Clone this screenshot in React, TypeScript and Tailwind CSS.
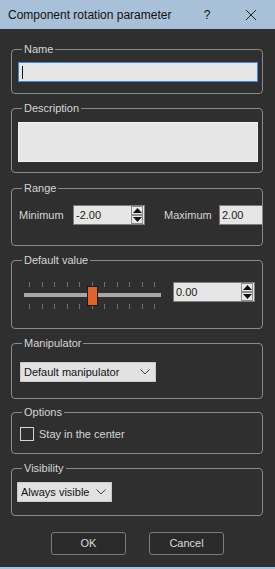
import React from "react";

function Group({
  title,
  className = "",
  children,
}: {
  title: string;
  className?: string;
  children?: React.ReactNode;
}) {
  return (
    <fieldset className={`min-w-0 rounded-[4px] border border-[#8a8a8a] ${className}`}>
      <legend className="ml-[10px] px-[2px] text-[11px] leading-[16px] text-[#d6d6d6]">
        {title}
      </legend>
      {children}
    </fieldset>
  );
}

const Arrow = ({ up }: { up?: boolean }) => (
  <div className="flex h-[9px] items-center justify-center border border-[#8c8c8c] bg-[#e8e8e8]">
    <svg width="9" height="5" viewBox="0 0 9 5">
      {up ? <polygon points="0,5 9,5 4.5,0" fill="#111" /> : <polygon points="0,0 9,0 4.5,5" fill="#111" />}
    </svg>
  </div>
);

function SpinBox({ value, className = "" }: { value: string; className?: string }) {
  return (
    <div className={`flex h-[20px] shrink-0 border border-[#7c7c7c] bg-[#e6e6e6] ${className}`}>
      <span className="flex-1 pl-[2px] text-[11px] leading-[18px] text-[#1a1a1a]">{value}</span>
      <div className="flex w-[13px] flex-col justify-center pr-[1px]">
        <Arrow up />
        <Arrow />
      </div>
    </div>
  );
}

const Chevron = () => (
  <svg width="10" height="6" viewBox="0 0 10 6" className="shrink-0">
    <polyline points="0.5,0.5 5,5 9.5,0.5" fill="none" stroke="#444" strokeWidth="1" />
  </svg>
);

function Combo({ label, className = "" }: { label: string; className?: string }) {
  return (
    <div
      className={`flex h-[20px] items-center justify-between whitespace-nowrap border border-[#c9c9c9] bg-[#e1e1e1] pl-[3px] pr-[5px] ${className}`}
    >
      <span className="text-[11px] leading-[18px] text-[#111]">{label}</span>
      <Chevron />
    </div>
  );
}

export default function App() {
  const ticks = Array.from({ length: 11 });

  return (
    <div className="flex h-[569px] w-[275px] flex-col overflow-hidden bg-[#2f2f2f] font-['Liberation_Sans',Arial,sans-serif]">
      {/* Title bar */}
      <div className="flex h-[29px] shrink-0 items-center bg-[#a9c0d9] pl-[8px] text-[#111]">
        <span className="flex-1 text-[12px] leading-[16px]">Component rotation parameter</span>
        <span className="mr-[10px] w-[20px] text-center text-[12px]">?</span>
        <span className="flex w-[48px] justify-center">
          <svg width="12" height="12" viewBox="0 0 12 12">
            <path d="M1 1 L11 11 M11 1 L1 11" stroke="#222" strokeWidth="1" />
          </svg>
        </span>
      </div>

      <div className="flex flex-col pl-[11px] pr-[12px]">
        {/* Name */}
        <Group title="Name" className="mt-[12px] h-[53px] pt-[5px]">
          <div className="ml-[6px] flex h-[20px] w-[240px] items-center border border-[#3c8ad8] bg-[#e6e6e6] pl-[3px]">
            <div className="h-[13px] w-[1px] bg-[#111]" />
          </div>
        </Group>

        {/* Description */}
        <Group title="Description" className="mt-[6px] h-[73px] pt-[6px]">
          <div className="ml-[6px] h-[40px] w-[240px] border border-[#f4f4f4] bg-[#e6e6e6]" />
        </Group>

        {/* Range */}
        <Group title="Range" className="mt-[7px] h-[66px] overflow-hidden pt-[9px]">
          <div className="flex items-center whitespace-nowrap">
            <span className="ml-[7px] w-[54px] shrink-0 text-[11px] text-[#d6d6d6]">Minimum</span>
            <SpinBox value="-2.00" className="w-[72px]" />
            <span className="ml-[19px] w-[55px] shrink-0 text-[11px] text-[#d6d6d6]">Maximum</span>
            <div className="h-[20px] w-[60px] shrink-0 border border-[#7c7c7c] bg-[#e6e6e6] pl-[2px] text-[11px] leading-[18px] text-[#1a1a1a]">
              2.00
            </div>
          </div>
        </Group>

        {/* Default value */}
        <Group title="Default value" className="mt-[6px] h-[77px] pt-[14px]">
          <div className="flex items-start">
            <div className="relative ml-[12px] h-[28px] w-[137px] shrink-0">
              <div className="ml-[5px] flex w-[126px] justify-between">
                {ticks.map((_, i) => (
                  <div key={i} className="h-[5px] w-[1px] bg-[#707070]" />
                ))}
              </div>
              <div className="mt-[6px] h-[4px] w-full bg-[#a7a7a7]" />
              <div className="mt-[7px] ml-[5px] flex w-[126px] justify-between">
                {ticks.map((_, i) => (
                  <div key={i} className="h-[5px] w-[1px] bg-[#707070]" />
                ))}
              </div>
              <div className="absolute left-[63px] top-[4px] h-[20px] w-[11px] border border-[#1a1a1a] bg-[#e2622a]" />
            </div>
            <SpinBox value="0.00" className="ml-[12px] w-[82px]" />
          </div>
        </Group>

        {/* Manipulator */}
        <Group title="Manipulator" className="mt-[6px] h-[64px] pt-[11px]">
          <Combo label="Default manipulator" className="ml-[8px] w-[136px]" />
        </Group>

        {/* Options */}
        <Group title="Options" className="mt-[5px] h-[50px] pt-[6px]">
          <label className="ml-[8px] flex items-center gap-[5px]">
            <span className="h-[14px] w-[14px] border border-[#d4d4d4]" />
            <span className="text-[11px] leading-[16px] text-[#d6d6d6]">Stay in the center</span>
          </label>
        </Group>

        {/* Visibility */}
        <Group title="Visibility" className="mt-[6px] h-[56px] pt-[6px]">
          <Combo label="Always visible" className="ml-[5px] w-[95px]" />
        </Group>
      </div>

      {/* Buttons */}
      <div className="mt-[16px] flex gap-[23px] pl-[51px]">
        <button className="h-[23px] w-[75px] rounded-[3px] border border-[#7c7c7c] bg-[#2a2a2a] text-[11px] text-[#dcdcdc]">
          OK
        </button>
        <button className="h-[23px] w-[75px] rounded-[3px] border border-[#7c7c7c] bg-[#2a2a2a] text-[11px] text-[#dcdcdc]">
          Cancel
        </button>
      </div>

      <div className="mt-auto h-[2px] w-full bg-[#a9c0d9]" />
    </div>
  );
}
